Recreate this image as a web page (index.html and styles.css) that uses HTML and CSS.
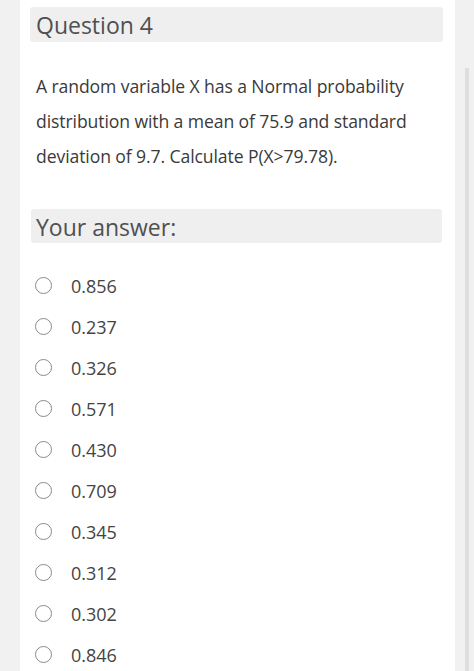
FILE: index.html
```html
<!DOCTYPE html>
<html>
<head>
<meta charset="utf-8">
<link rel="stylesheet" href="styles.css">
</head>
<body>
<div class="page">
  <div class="gutter-left"></div>
  <main class="card">
    <div class="heading">Question 4</div>
    <p class="question">A random variable X has a Normal probability distribution with a mean of 75.9 and standard deviation of 9.7. Calculate P(X&gt;79.78).</p>
    <div class="heading answer-heading">Your answer:</div>
    <ul class="options">
      <li class="option"><span class="radio"></span><span class="label">0.856</span></li>
      <li class="option"><span class="radio"></span><span class="label">0.237</span></li>
      <li class="option"><span class="radio"></span><span class="label">0.326</span></li>
      <li class="option"><span class="radio"></span><span class="label">0.571</span></li>
      <li class="option"><span class="radio"></span><span class="label">0.430</span></li>
      <li class="option"><span class="radio"></span><span class="label">0.709</span></li>
      <li class="option"><span class="radio"></span><span class="label">0.345</span></li>
      <li class="option"><span class="radio"></span><span class="label">0.312</span></li>
      <li class="option"><span class="radio"></span><span class="label">0.302</span></li>
      <li class="option"><span class="radio"></span><span class="label">0.846</span></li>
    </ul>
  </main>
  <div class="gutter-right"><div class="thumb"></div></div>
</div>
</body>
</html>
```
FILE: styles.css
```css
html, body {
  margin: 0;
  padding: 0;
  background: #f1f1f1;
  font-family: "Open Sans", "Noto Sans", sans-serif;
  height: 671px;
  overflow: hidden;
}
.page {
  display: flex;
  height: 671px;
}
.gutter-left {
  width: 20px;
  flex: none;
  background: #f1f1f1;
}
.card {
  width: 435px;
  flex: none;
  background: #ffffff;
  padding: 7px 12px 0 10px;
  box-sizing: border-box;
}
.gutter-right {
  width: 19px;
  flex: none;
  background: #f1f1f1;
  display: flex;
  justify-content: flex-start;
  padding-left: 10px;
  box-sizing: border-box;
}
.thumb {
  width: 4px;
  margin-top: 68px;
  background: #dedede;
  height: 603px;
}
.heading {
  background: #efefef;
  height: 35px;
  border-radius: 3px;
  padding-left: 6px;
  font-size: 23px;
  line-height: 36px;
  color: #505050;
}
.question {
  margin: 27px 0 0 0;
  padding-left: 6px;
  font-size: 17.6px;
  line-height: 35px;
  color: #3a3a3a;
  letter-spacing: -0.1px;
}
.answer-heading {
  margin-top: 35px;
  margin-right: 1px;
  margin-left: 1px;
  height: 34px;
  padding-left: 5px;
}
.options {
  list-style: none;
  margin: 22px 0 0 0;
  padding: 0;
}
.option {
  display: flex;
  align-items: center;
  height: 41px;
}
.radio {
  width: 15px;
  height: 15px;
  border: 1.6px solid #8a8a8a;
  border-radius: 50%;
  margin-left: 5px;
  flex: none;
}
.label {
  margin-left: 19px;
  font-size: 18px;
  color: #444444;
}
```
